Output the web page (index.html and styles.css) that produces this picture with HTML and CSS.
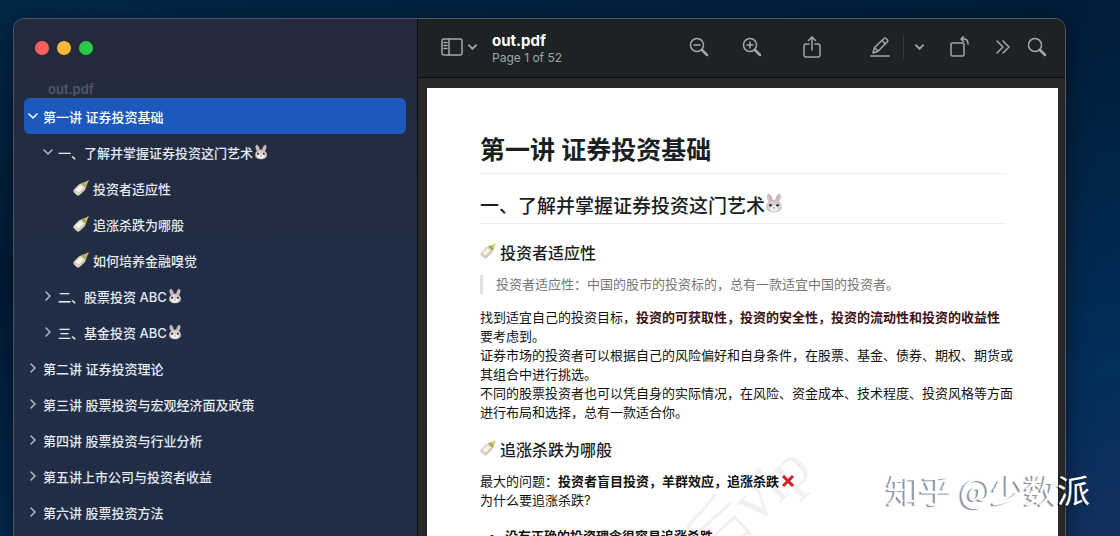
FILE: index.html
```html
<!DOCTYPE html>
<html lang="zh-CN">
<head>
    <meta charset="UTF-8">
    <meta name="viewport" content="width=device-width, initial-scale=1.0">
    <title>out.pdf</title>
    <link rel="stylesheet" href="styles.css">
</head>
<body>

    <!-- Shared icons -->
    <svg class="sprite" aria-hidden="true">
        <symbol id="down" viewBox="0 0 10 10"><path d="M1 3l4 4 4-4"/></symbol>
        <symbol id="right" viewBox="0 0 10 10"><path d="M3 1l4 4-4 4"/></symbol>
        <symbol id="rabbit" viewBox="0 0 16 18">
            <path d="M3 1c2 0 3 3 3.500 6l-2.500 1C2 6 1.500 2 3 1zM13 1c-2 0-3 3-3.500 6l2.500 1c2-2 2.500-6 1-7z" fill="#d8d2d3" stroke="#aaa3a6" stroke-width=".6"/>
            <path d="M3.400 2.500c.8 1 1.300 2.500 1.500 4M12.600 2.500c-.8 1-1.300 2.500-1.500 4" fill="none" stroke="#d99aa5" stroke-width="1.200"/>
            <path d="M8 6.500c4 0 6.500 3 6.500 6S12 17 8 17s-6.500-1.500-6.500-4.500 2.500-6 6.500-6z" fill="#d5d0d1" stroke="#aaa4a6" stroke-width=".5"/>
            <ellipse cx="8" cy="14" rx="3.500" ry="2.600" fill="#f7f3f2"/>
            <circle cx="4.800" cy="11" r="1.200" fill="#342f34"/>
            <circle cx="11.200" cy="11" r="1.200" fill="#342f34"/>
            <path d="M7 12.500h2l-1 1.200z" fill="#d3717d"/>
            <path d="M8 13.500v1.500" stroke="#77696c" stroke-width=".6"/>
        </symbol>
        <symbol id="bottle" viewBox="0 0 16 16">
            <path d="M8.500 3.200L13 7l-1 3-5.200 5q-1.600 1.300-3.200 0L1 12.600q-1.400-1.600 0-3.200L5.800 4.600z" fill="#d9d0bf"/>
            <path d="M2.500 9.700l5-4.700 3 2.500-5 5.200z" fill="#f8f3e6"/>
            <path d="M8 3.300L12.900 8l1.100-2.500-3.300-3.300z" fill="#9aad4f"/>
            <path d="M10.500 2.200l2.500-.4L15 .2q.8-.2.8.6l-1.400 2.400-.6 2.200z" fill="#e3bd55"/>
            <path d="M6.500 12.500l1 1M8.300 10.700l1 1M10 9l1 1" stroke="#a09786" stroke-width=".6"/>
        </symbol>
    </svg>

    <div class="window">

        <!-- Sidebar with the document outline -->
        <aside class="sidebar">
            <div class="lights">
                <button class="light red" aria-label="关闭"></button>
                <button class="light yellow" aria-label="最小化"></button>
                <button class="light green" aria-label="缩放"></button>
            </div>
            <div class="file-name">out.pdf</div>
            <nav class="outline">
                <a href="#c1" class="item active"><svg class="arrow"><use href="#down"/></svg>第一讲 证券投资基础</a>
                <a href="#s1" class="item level2"><svg class="arrow"><use href="#down"/></svg>一、了解并掌握证券投资这门艺术<svg class="emoji"><use href="#rabbit"/></svg></a>
                <a href="#t1" class="item level3"><svg class="emoji"><use href="#bottle"/></svg>投资者适应性</a>
                <a href="#t2" class="item level3"><svg class="emoji"><use href="#bottle"/></svg>追涨杀跌为哪般</a>
                <a href="#t3" class="item level3"><svg class="emoji"><use href="#bottle"/></svg>如何培养金融嗅觉</a>
                <a href="#s2" class="item level2"><svg class="arrow"><use href="#right"/></svg>二、股票投资 ABC<svg class="emoji"><use href="#rabbit"/></svg></a>
                <a href="#s3" class="item level2"><svg class="arrow"><use href="#right"/></svg>三、基金投资 ABC<svg class="emoji"><use href="#rabbit"/></svg></a>
                <a href="#c2" class="item"><svg class="arrow"><use href="#right"/></svg>第二讲 证券投资理论</a>
                <a href="#c3" class="item"><svg class="arrow"><use href="#right"/></svg>第三讲 股票投资与宏观经济面及政策</a>
                <a href="#c4" class="item"><svg class="arrow"><use href="#right"/></svg>第四讲 股票投资与行业分析</a>
                <a href="#c5" class="item"><svg class="arrow"><use href="#right"/></svg>第五讲上市公司与投资者收益</a>
                <a href="#c6" class="item"><svg class="arrow"><use href="#right"/></svg>第六讲 股票投资方法</a>
            </nav>
        </aside>

        <main class="viewer">
            <header class="toolbar">
                <button class="tool view-menu" aria-label="显示边栏">
                    <svg width="22" height="18" viewBox="0 0 22 18"><rect x="1" y="1" width="20" height="16" rx="2"/><path d="M8 1v16M3 4.500h3M3 7.500h3M3 10.500h3"/></svg>
                    <svg class="caret"><use href="#down"/></svg>
                </button>
                <div class="title">
                    <strong>out.pdf</strong>
                    <span>Page 1 of 52</span>
                </div>
                <div class="tools">
                    <button class="tool zoom-out" aria-label="缩小"><svg width="20" height="20" viewBox="0 0 20 20"><circle cx="8" cy="8" r="6.500"/><path d="M5 8h6"/><path class="thick" d="M13 13l5 5"/></svg></button>
                    <button class="tool zoom-in" aria-label="放大"><svg width="20" height="20" viewBox="0 0 20 20"><circle cx="8" cy="8" r="6.500"/><path d="M5 8h6M8 5v6"/><path class="thick" d="M13 13l5 5"/></svg></button>
                    <button class="tool share" aria-label="共享"><svg width="20" height="22" viewBox="0 0 20 22"><path d="M7 8H4q-2 0-2 2v9q0 2 2 2h12q2 0 2-2v-9q0-2-2-2h-3M10 14V1M6.500 4.500L10 1l3.500 3.500"/></svg></button>
                    <button class="tool markup" aria-label="标记"><svg width="20" height="20" viewBox="0 0 20 20"><path d="M3 16l1.500-5.500 9.500-9q1-1 2 0l1.300 1.300q1 1 0 2L8 14.300zM12 3.500l3.500 3.500M4.500 10.500L8 14M1 19h18"/></svg></button>
                    <span class="divider"></span>
                    <button class="tool more" aria-label="标记选项"><svg class="caret"><use href="#down"/></svg></button>
                    <button class="tool rotate" aria-label="旋转"><svg width="20" height="22" viewBox="0 0 20 22"><rect x="1" y="7" width="13" height="13" rx="1.500"/><path d="M11 3h3q4 0 4 5M13.500.7L11 3l2.500 2.500"/></svg></button>
                    <button class="tool overflow" aria-label="更多"><svg width="16" height="14" viewBox="0 0 16 14"><path d="M2 1l6 6-6 6M8 1l6 6-6 6"/></svg></button>
                    <button class="tool" aria-label="搜索"><svg width="20" height="20" viewBox="0 0 20 20"><circle cx="8" cy="8" r="6.500"/><path class="thick" d="M13 13l5 5"/></svg></button>
                </div>
            </header>

            <!-- PDF page -->
            <article class="page">
                <h1 id="c1">第一讲 证券投资基础</h1>
                <h2 id="s1">一、了解并掌握证券投资这门艺术<svg class="emoji"><use href="#rabbit"/></svg></h2>
                <h3 id="t1"><svg class="emoji"><use href="#bottle"/></svg>投资者适应性</h3>
                <blockquote>投资者适应性：中国的股市的投资标的，总有一款适宜中国的投资者。</blockquote>
                <p>找到适宜自己的投资目标，<strong class="brown">投资的可获取性，投资的安全性，投资的流动性和投资的收益性</strong><br>要考虑到。<br>
                证券市场的投资者可以根据自己的风险偏好和自身条件，在股票、基金、债券、期权、期货或<br>其组合中进行挑选。<br>
                不同的股票投资者也可以凭自身的实际情况，在风险、资金成本、技术程度、投资风格等方面<br>进行布局和选择，总有一款适合你。</p>
                <h3 id="t2"><svg class="emoji"><use href="#bottle"/></svg>追涨杀跌为哪般</h3>
                <p>最大的问题：<strong>投资者盲目投资，羊群效应，追涨杀跌</strong><svg class="cross" viewBox="0 0 14 14"><path d="M2 2l10 10M12 2L2 12"/></svg><br>为什么要追涨杀跌?</p>
                <ul>
                    <li><strong>没有正确的投资理念很容易追涨杀跌</strong></li>
                </ul>
                <span class="page-mark">后vip</span>
            </article>
        </main>
    </div>

    <span class="site-mark">知乎 @少数派</span>

</body>
</html>
```
FILE: styles.css
```css
* {
    margin: 0;
    padding: 0;
    box-sizing: border-box;
}

/* Desktop */
body {
    position: relative;
    height: 100vh;
    overflow: hidden;
    padding: 18px 54px 0 13px;
    background: linear-gradient(165deg, #002747 0%, #001c38 35%, #002f5a 80%, #15305f 100%);
    font-family: Inter, "Noto Sans CJK SC", sans-serif;
    font-size: 13px;
}

.sprite {
    position: absolute;
    width: 0;
    height: 0;
}

.window {
    display: flex;
    height: 100vh;
    border: 1px solid #4f5560;
    border-radius: 11px;
    overflow: hidden;
    box-shadow: 0 8px 24px rgba(0, 0, 0, 0.5);
}

/* Sidebar */
.sidebar {
    flex: 0 0 404px;
    padding: 22px 11px 0 10px;
    background: linear-gradient(#242a3b, #202e48 60%, #222d45);
    border-right: 1px solid #0b0d12;
}

.lights {
    display: flex;
    gap: 8px;
    padding-left: 11px;
}

.light {
    width: 14px;
    height: 14px;
    border: none;
    border-radius: 50%;
}

.red {
    background: #ff5f5b;
}

.yellow {
    background: #fdb83b;
}

.green {
    background: #2cc84a;
}

.file-name {
    margin-top: 25px;
    padding-left: 24px;
    line-height: 18px;
    font-weight: 600;
    color: #505668;
}

.item {
    display: flex;
    align-items: center;
    height: 36px;
    padding-left: 4px;
    border-radius: 6px;
    font-weight: 500;
    color: #e6e9f0;
    text-decoration: none;
    white-space: pre;
}

.active {
    background: #1d58bc;
    color: #fff;
}

.level2 {
    padding-left: 19px;
}

.level3 {
    padding-left: 49px;
}

.arrow,
.caret {
    width: 10px;
    height: 10px;
    margin-right: 5px;
    fill: none;
    stroke: #b4bac8;
    stroke-width: 1.5;
    stroke-linecap: round;
    stroke-linejoin: round;
}

.active .arrow {
    stroke: #fff;
}

.emoji {
    width: 16px;
    height: 16px;
}

.level3 .emoji {
    margin-right: 4px;
}

/* Toolbar */
.viewer {
    flex: 1;
    min-width: 0;
    background: #292828;
}

.toolbar {
    display: flex;
    align-items: flex-start;
    height: 59px;
    padding: 12px 18px 0 23px;
    background: #1d2225;
    border-bottom: 1px solid #0d0f10;
}

.tool {
    display: flex;
    align-items: center;
    justify-content: center;
    height: 32px;
    border: none;
    background: none;
}

.tool svg {
    fill: none;
    stroke: #a3a8ab;
    stroke-width: 1.5;
    stroke-linecap: round;
    stroke-linejoin: round;
}

.tool .thick {
    stroke-width: 2.5;
}

.tool .caret {
    width: 9px;
    margin: 0;
    stroke-width: 2;
}

.view-menu {
    gap: 5px;
}

.title {
    margin: 1px 0 0 15px;
}

.title strong,
.title span {
    display: block;
    line-height: 17px;
}

.title strong {
    font-size: 15px;
    color: #fff;
}

.title span {
    font-size: 12px;
    color: #a1a5a8;
}

.tools {
    display: flex;
    align-items: center;
    margin-left: auto;
}

.zoom-out {
    margin-right: 33px;
}

.zoom-in {
    margin-right: 40px;
}

.share {
    margin-right: 48px;
}

.divider {
    width: 1px;
    height: 24px;
    margin: 0 11px 0 13px;
    background: #303639;
}

.rotate {
    margin: 0 25px 0 26px;
}

.overflow {
    margin-right: 16px;
}

/* PDF page */
.page {
    position: relative;
    margin: 10px 7px 0 9px;
    padding: 44px 52px 0 53px;
    background: #fff;
    height: 100%;
    color: #111;
    line-height: 19px;
    white-space: nowrap;
}

h1,
h2,
h3 {
    font-weight: 500;
    color: #1b1f23;
}

h1 {
    padding-bottom: 4px;
    border-bottom: 1px solid #eee;
    font-size: 25px;
    font-weight: 600;
    line-height: 37px;
}

h2 {
    margin: 18px 0;
    padding-bottom: 1px;
    border-bottom: 1px solid #eee;
    font-size: 19px;
    line-height: 30px;
}

h3 {
    margin-bottom: 11px;
    font-size: 16px;
    line-height: 22px;
}

h3 .emoji {
    margin-right: 4px;
}

h2 .emoji {
    width: 18px;
    height: 20px;
}

blockquote {
    margin-bottom: 14px;
    padding-left: 13px;
    border-left: 3px solid #dfe2e5;
    color: #777;
}

p {
    margin-bottom: 17px;
}

p strong,
li strong {
    font-weight: 600;
}

.brown {
    color: #3b1418;
}

.cross {
    width: 14px;
    height: 14px;
    margin-left: 2px;
    vertical-align: -2px;
    fill: none;
    stroke: #d91f2c;
    stroke-width: 3;
}

ul {
    padding-left: 25px;
}

/* Watermarks */
.page-mark {
    position: absolute;
    left: 250px;
    top: 386px;
    font-family: "Liberation Serif", "Noto Sans CJK SC", serif;
    font-size: 62px;
    line-height: 60px;
    font-weight: 300;
    color: rgba(0, 0, 0, 0.06);
    transform: rotate(-42deg);
}

.site-mark {
    position: absolute;
    right: 30px;
    bottom: 25px;
    font-family: "Noto Sans CJK SC", sans-serif;
    font-size: 33px;
    line-height: 44px;
    color: #fff;
    text-shadow: -2px 1px 1px rgba(0, 0, 0, 0.45);
}
```
